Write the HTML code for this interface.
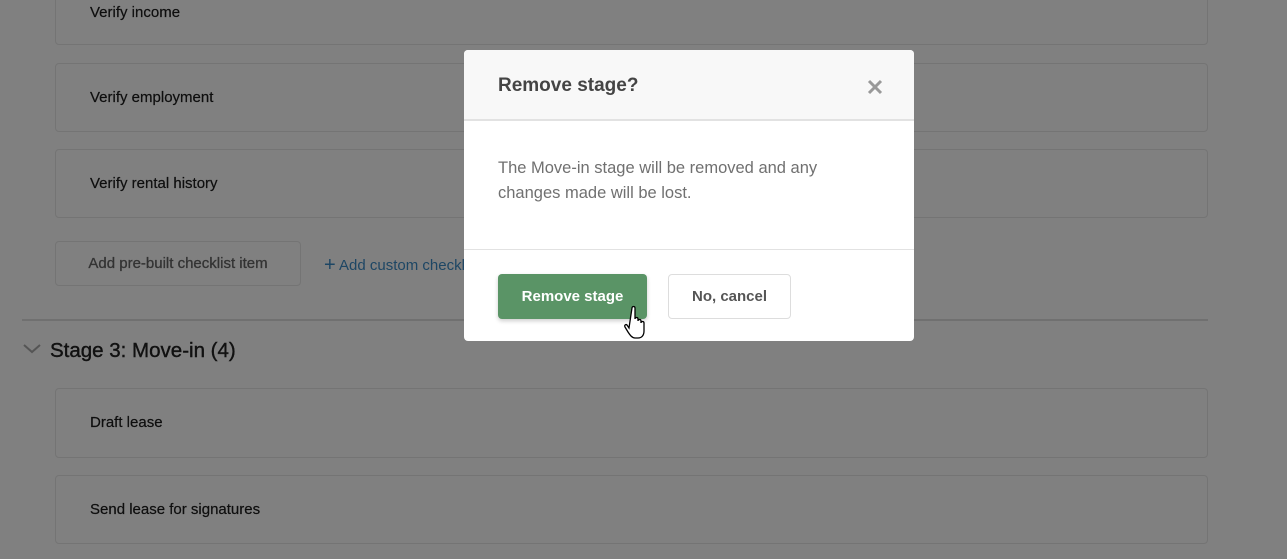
<!DOCTYPE html>
<html><head><style>
*{box-sizing:border-box;margin:0;padding:0}
body{width:1287px;height:559px;overflow:hidden;background:#808080;font-family:"Liberation Sans",sans-serif;position:relative}
.card{position:absolute;left:55px;width:1153px;border:1px solid #747474;border-radius:4px;font-size:15px;color:#0e0e0e;padding-left:34px;-webkit-text-stroke:0.2px #0e0e0e}
.btn{position:absolute;left:55px;top:241px;width:246px;height:45px;border:1px solid #747474;border-radius:4px;font-size:15px;color:#333;text-align:center;line-height:43px;-webkit-text-stroke:0.3px #333}
.link{position:absolute;left:324px;top:253px;font-size:15px;color:#1d4664}
.div{position:absolute;left:22px;top:319px;width:1186px;height:2px;background:#707070}
.stage{position:absolute;left:50px;top:339px;font-size:20.5px;color:#111;-webkit-text-stroke:0.4px #111}
.chev{position:absolute;left:23px;top:343px}
.modal{position:absolute;left:464px;top:50px;width:450px;height:291px;background:#fff;border-radius:4px;overflow:hidden}
.mh{height:71px;background:#f8f8f8;border-bottom:2px solid #e2e2e2;position:relative}
.mh h2{position:absolute;left:34px;top:25px;font-size:19px;font-weight:bold;color:#444}
.x{position:absolute;left:403px;top:29px}
.mb{position:absolute;left:34px;top:106px;font-size:16.5px;line-height:25px;color:#707070;width:380px}
.mf{position:absolute;left:0;top:199px;width:450px;border-top:1px solid #e2e2e2}
.rb{position:absolute;left:34px;top:224px;width:149px;height:45px;background:#5a9466;border-radius:4px;color:#fff;font-weight:bold;font-size:15px;text-align:center;line-height:45px;box-shadow:0 2px 4px rgba(0,0,0,.2)}
.cb{position:absolute;left:204px;top:224px;width:123px;height:45px;border:1px solid #ddd;border-radius:4px;color:#555;font-weight:bold;font-size:15px;text-align:center;line-height:43px}
</style></head><body>
<div class="card" style="top:-25px;height:70px"><span style="display:block;margin-top:28px">Verify income</span></div>
<div class="card" style="top:63px;height:69px;line-height:67px">Verify employment</div>
<div class="card" style="top:149px;height:69px;line-height:67px">Verify rental history</div>
<div class="btn">Add pre-built checklist item</div>
<div class="link"><b style="font-size:20px;font-weight:normal;position:relative;top:1px">+</b> Add custom checklist item</div>
<div class="div"></div>
<svg class="chev" width="18" height="12" viewBox="0 0 18 12"><path d="M1 2l8 7 8-7" fill="none" stroke="#555" stroke-width="2"/></svg>
<div class="stage">Stage 3: Move-in (4)</div>
<div class="card" style="top:388px;height:70px;line-height:68px">Draft lease</div>
<div class="card" style="top:475px;height:69px;line-height:67px">Send lease for signatures</div>
<div class="modal">
<div class="mh"><h2>Remove stage?</h2><svg class="x" width="16" height="16" viewBox="0 0 16 16"><path d="M2 2l12 12M14 2L2 14" stroke="#999" stroke-width="3"/></svg></div>
<div class="mb">The Move-in stage will be removed and any changes made will be lost.</div>
<div class="mf"></div>
<div class="rb">Remove stage</div>
<div class="cb">No, cancel</div>
<svg style="position:absolute;left:160px;top:255px" width="26" height="36" viewBox="0 0 26 36"><path d="M8 3c0-2 3-2 3 0v11c0-2 3-2 3 0v2c0-2 3-2 3 0v2c0-2 3-2 3 0v8c0 4-2 7-6 7h-3c-3 0-5-3-7-6l-3-5c-1-2 1-3 2-2l2 3z" fill="#fff" stroke="#000" stroke-width="1.3"/></svg>
</div>
</body></html>
